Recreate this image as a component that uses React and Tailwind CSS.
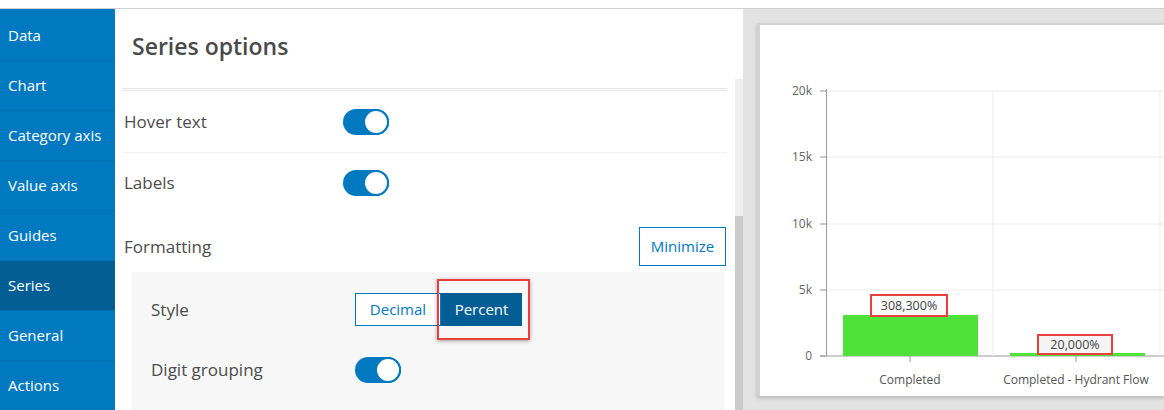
const navItems = [
  "Data",
  "Chart",
  "Category axis",
  "Value axis",
  "Guides",
  "Series",
  "General",
  "Actions",
];

const Toggle = () => {
  return (
    <div className="relative w-[46px] h-[26px] rounded-full bg-[#0079c1]">
      <div className="absolute right-0 top-0 w-[26px] h-[26px] rounded-full bg-white border-2 border-[#0079c1]"></div>
    </div>
  );
};

const Chart = () => {
  const grid = [
    { y: 66, label: "20k" },
    { y: 132, label: "15k" },
    { y: 199, label: "10k" },
    { y: 265, label: "5k" },
    { y: 331, label: "0" },
  ];
  return (
    <svg
      width="407"
      height="371"
      className="block -ml-[3px]"
      style={{ fontFamily: "'Open Sans', sans-serif" }}
    >
      {grid.map((g) => (
        <g key={g.label}>
          <line x1="63" x2="407" y1={g.y} y2={g.y} stroke={g.label === "0" ? "#9a9a9a" : "#ececec"} strokeWidth="1" />
          <line x1="63" x2="69" y1={g.y} y2={g.y} stroke="#9a9a9a" />
          <text x="55" y={g.y + 4} fontSize="12" fill="#666" textAnchor="end">
            {g.label}
          </text>
        </g>
      ))}
      <line x1="236" x2="236" y1="66" y2="331" stroke="#ececec" />
      <line x1="403" x2="403" y1="66" y2="331" stroke="#ececec" />
      <line x1="69.5" x2="69.5" y1="64" y2="331" stroke="#9a9a9a" />
      <rect x="86" y="290" width="135" height="41" fill="#4fe33a" />
      <rect x="253" y="328" width="135" height="3" fill="#4fe33a" />
      <line x1="153" x2="153" y1="331" y2="337" stroke="#9a9a9a" />
      <line x1="319" x2="319" y1="331" y2="337" stroke="#9a9a9a" />
      <text x="153" y="359" fontSize="12" fill="#555" textAnchor="middle">
        Completed
      </text>
      <text x="319" y="359" fontSize="12" fill="#555" textAnchor="middle">
        Completed - Hydrant Flow
      </text>
      <rect x="114" y="270" width="76" height="21" fill="#fafafa" stroke="#e8403f" strokeWidth="2" />
      <text x="152" y="285" fontSize="12.5" fill="#444" textAnchor="middle">
        308,300%
      </text>
      <rect x="281" y="310" width="74" height="19" fill="#f4f4f4" stroke="#e8403f" strokeWidth="2" />
      <text x="318" y="324" fontSize="12.5" fill="#444" textAnchor="middle">
        20,000%
      </text>
    </svg>
  );
};

const App = () => {
  return (
    <div
      className="w-[1164px] h-[410px] overflow-hidden bg-white"
      style={{ fontFamily: "'Open Sans', sans-serif" }}
    >
      <div className="h-[9px] border-b border-[#cfcfcf]"></div>
      <div className="flex h-[401px]">
        {/* Side nav */}
        <div className="w-[115px] shrink-0 bg-[#0079c1] pt-[2px]">
          {navItems.map((item) => (
            <div
              key={item}
              className={
                "h-[50px] flex items-center pl-[8px] text-[15px] text-white border-b border-[#0071b5] " +
                (item === "Series" ? "bg-[#005e95]" : "")
              }
            >
              {item}
            </div>
          ))}
        </div>

        {/* Options panel */}
        <div className="w-[620px] shrink-0 relative">
          <div className="h-[79px] pl-[17px] pt-[22px]">
            <h2 className="text-[23px] leading-[30px] font-semibold text-[#4a4a4a]">
              Series options
            </h2>
          </div>
          <div className="ml-[7px] w-[605px] h-[3px] border-y border-[#e6e6e6]"></div>

          <div className="pl-[9px] pr-[8px]">
            <div className="h-[62px] flex items-center border-b border-[#f1f1f1]">
              <div className="w-[219px] text-[17px] text-[#4c4c4c]">Hover text</div>
              <Toggle />
            </div>
            <div className="h-[60px] flex items-center">
              <div className="w-[219px] text-[17px] text-[#4c4c4c]">Labels</div>
              <Toggle />
            </div>
            <div className="h-[59px] pt-[14px] flex items-start justify-between">
              <div className="h-[39px] flex items-center text-[17px] text-[#4c4c4c]">
                Formatting
              </div>
              <button className="h-[39px] w-[87px] mr-[1px] border border-[#0079c1] text-[#0079c1] text-[15px] bg-white">
                Minimize
              </button>
            </div>
          </div>

          <div className="ml-[16px] w-[594px] h-[140px] bg-[#f7f7f7] pl-[20px] pt-[21px]">
            <div className="flex items-center">
              <div className="w-[204px] text-[17px] text-[#4c4c4c]">Style</div>
              <div className="flex">
                <button className="h-[33px] w-[86px] border border-[#0079c1] bg-white text-[#0079c1] text-[15px]">
                  Decimal
                </button>
                <button className="h-[33px] w-[81px] bg-[#005e95] text-white text-[15px]">
                  Percent
                </button>
              </div>
            </div>
            <div className="flex items-center mt-[31px]">
              <div className="w-[204px] text-[17px] text-[#4c4c4c]">Digit grouping</div>
              <Toggle />
            </div>
          </div>

          {/* annotation box */}
          <div className="absolute left-[322px] top-[270px] w-[93px] h-[61px] border-2 border-[#e8403f] shadow-[0_1px_4px_rgba(0,0,0,0.35)]"></div>
        </div>

        {/* Scrollbar */}
        <div className="w-[8px] shrink-0 flex flex-col">
          <div className="h-[70px] bg-white"></div>
          <div className="h-[137px] bg-[#efefef]"></div>
          <div className="flex-1 bg-[#cbcbcb]"></div>
        </div>

        {/* Preview */}
        <div className="flex-1 bg-[#e3e3e3] pl-[14px] pt-[14px]">
          <div className="h-[373px] bg-white border-l-[3px] border-t-[2px] border-[#d2d2d2] shadow-[0_2px_4px_rgba(0,0,0,0.2)]">
            <Chart />
          </div>
        </div>
      </div>
    </div>
  );
};

export default App;
